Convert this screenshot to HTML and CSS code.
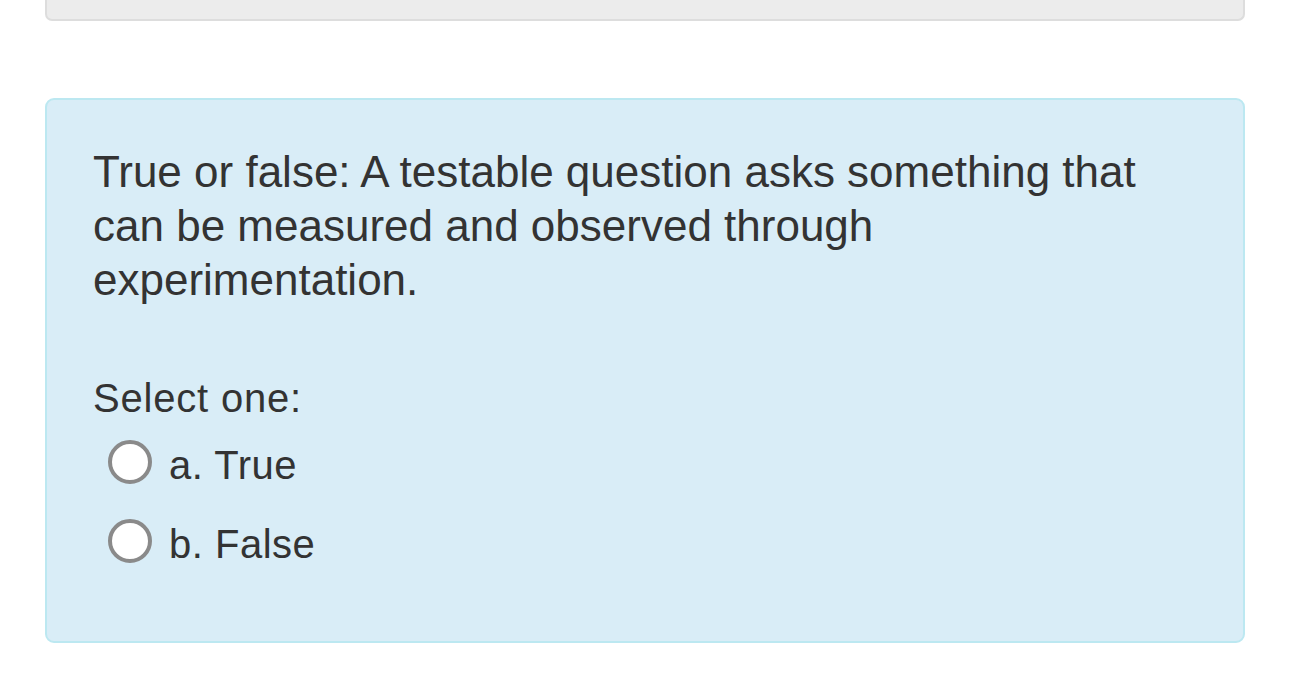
FILE: index.html
```html
<!DOCTYPE html>
<html>
<head>
<meta charset="utf-8">
<link rel="stylesheet" href="styles.css">
</head>
<body>
<div class="page">
  <div class="prev-box"></div>
  <div class="question">
    <div class="qtext">True or false: A testable question asks something that can be measured and observed through experimentation.</div>
    <div class="prompt">Select one:</div>
    <div class="answers">
      <label class="option"><span class="radio"></span><span class="label">a. True</span></label>
      <label class="option"><span class="radio"></span><span class="label">b. False</span></label>
    </div>
  </div>
</div>
</body>
</html>
```
FILE: styles.css
```css
html, body {
  margin: 0;
  padding: 0;
  background: #ffffff;
}
body {
  font-family: "Liberation Sans", Arial, sans-serif;
  color: #333333;
}
.page {
  padding: 0 45px;
}
.prev-box {
  height: 19px;
  background: #ececec;
  border: 2px solid #dddddd;
  border-top: none;
  border-radius: 0 0 7px 7px;
}
.question {
  margin-top: 77px;
  background: #d9edf7;
  border: 2px solid #bce8f1;
  border-radius: 9px;
  padding: 45px 46px 0 46px;
  box-sizing: border-box;
  height: 545px;
  font-size: 40px;
  line-height: 54px;
  letter-spacing: 0.5px;
}
.qtext {
  width: 1060px;
  font-size: 44px;
  letter-spacing: 0;
}
.prompt {
  margin-top: 64px;
  letter-spacing: 0.8px;
}
.answers {
  display: flex;
  flex-direction: column;
  margin-top: 13px;
  gap: 25px;
}
.option {
  display: flex;
  align-items: center;
  height: 54px;
  padding-left: 15px;
}
.radio {
  width: 36px;
  height: 36px;
  border: 4px solid #8a8a8a;
  border-radius: 50%;
  background: #ffffff;
  flex: none;
  margin-bottom: 7px;
}
.label {
  margin-left: 17px;
}
```
